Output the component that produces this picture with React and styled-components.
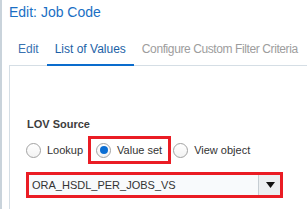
import React from "react";
import styled, { createGlobalStyle } from "styled-components";

const Global = createGlobalStyle`
  html, body { margin: 0; padding: 0; background: #fff; }
  body { font-family: "Liberation Sans", Arial, sans-serif; }
  * { box-sizing: border-box; }
`;

const Page = styled.div`
  min-height: 209px;
  border-left: 2px solid #c9d3db;
  padding-left: 7px;
  overflow: hidden;
`;

const Title = styled.h1`
  margin: 0;
  padding-top: 4px;
  font-size: 14px;
  line-height: 16px;
  font-weight: normal;
  color: #1a6fc4;
`;

const TabBar = styled.div`
  display: flex;
  margin-top: 22px;
  padding-left: 1px;
  border-bottom: 1px solid #d5dee5;
`;

const Tab = styled.div`
  position: relative;
  padding: 0 8px 8px;
  margin-bottom: -1px;
  font-size: 12px;
  line-height: 14px;
  white-space: nowrap;
  letter-spacing: ${(p) => (p.$disabled ? "-0.4px" : "0")};
  color: ${(p) => (p.$disabled ? "#9d9d9d" : p.$active ? "#1c5fa6" : "#3a72b0")};
  border-bottom: 2px solid ${(p) => (p.$active ? "#0a6ccd" : "transparent")};
`;

const Panel = styled.div`
  border-left: 1px solid #d5dee5;
  min-height: 143px;
  padding: 52px 0 0 16px;
`;

const SectionLabel = styled.div`
  padding-left: 1px;
  font-size: 11px;
  line-height: 13px;
  font-weight: bold;
  color: #3d3d3d;
`;

const RadioRow = styled.div`
  display: flex;
  align-items: center;
  margin-top: 5px;
`;

const Highlight = styled.div`
  border: 3px solid #ea1c24;
`;

const RadioHighlight = styled(Highlight)`
  display: flex;
  align-items: center;
  height: 28px;
  margin: 0 2px 0 5px;
  padding: 0 6px 0 5px;
`;

const RadioItem = styled.label`
  display: flex;
  align-items: center;
  gap: 6px;
  font-size: 11px;
  line-height: 13px;
  color: #333;
`;

const Circle = styled.span`
  width: 15px;
  height: 15px;
  border-radius: 50%;
  border: 1px solid #a2a2a2;
  background: linear-gradient(#ffffff, #f3f3f3);
  display: flex;
  align-items: center;
  justify-content: center;
  &::after {
    content: "";
    width: 8px;
    height: 8px;
    border-radius: 50%;
    background: ${(p) => (p.$checked ? "#0b6ed3" : "transparent")};
  }
`;

const SelectHighlight = styled(Highlight)`
  width: 257px;
  margin-top: 8px;
`;

const Field = styled.div`
  display: flex;
  height: 20px;
`;

const FieldText = styled.div`
  flex: 1;
  padding-left: 3px;
  background: #f8fafc;
  font-size: 11px;
  line-height: 20px;
  color: #333;
`;

const DropButton = styled.div`
  width: 22px;
  border-left: 1px solid #c6cdd3;
  background: #eceff1;
  display: flex;
  align-items: center;
  justify-content: center;
  padding-left: 2px;
`;

function Radio({ label, checked }) {
  return (
    <RadioItem>
      <Circle $checked={checked} />
      {label}
    </RadioItem>
  );
}

export default function App() {
  return (
    <>
      <Global />
      <Page>
        <Title>Edit: Job Code</Title>
        <TabBar>
          <Tab>Edit</Tab>
          <Tab $active>List of Values</Tab>
          <Tab $disabled>Configure Custom Filter Criteria</Tab>
        </TabBar>
        <Panel>
          <SectionLabel>LOV Source</SectionLabel>
          <RadioRow>
            <Radio label="Lookup" />
            <RadioHighlight>
              <Radio label="Value set" checked />
            </RadioHighlight>
            <Radio label="View object" />
          </RadioRow>
          <SelectHighlight>
            <Field>
              <FieldText>ORA_HSDL_PER_JOBS_VS</FieldText>
              <DropButton>
                <svg width="9" height="6" viewBox="0 0 9 6">
                  <path d="M0 0 L9 0 L4.5 6 Z" fill="#111" />
                </svg>
              </DropButton>
            </Field>
          </SelectHighlight>
        </Panel>
      </Page>
    </>
  );
}
